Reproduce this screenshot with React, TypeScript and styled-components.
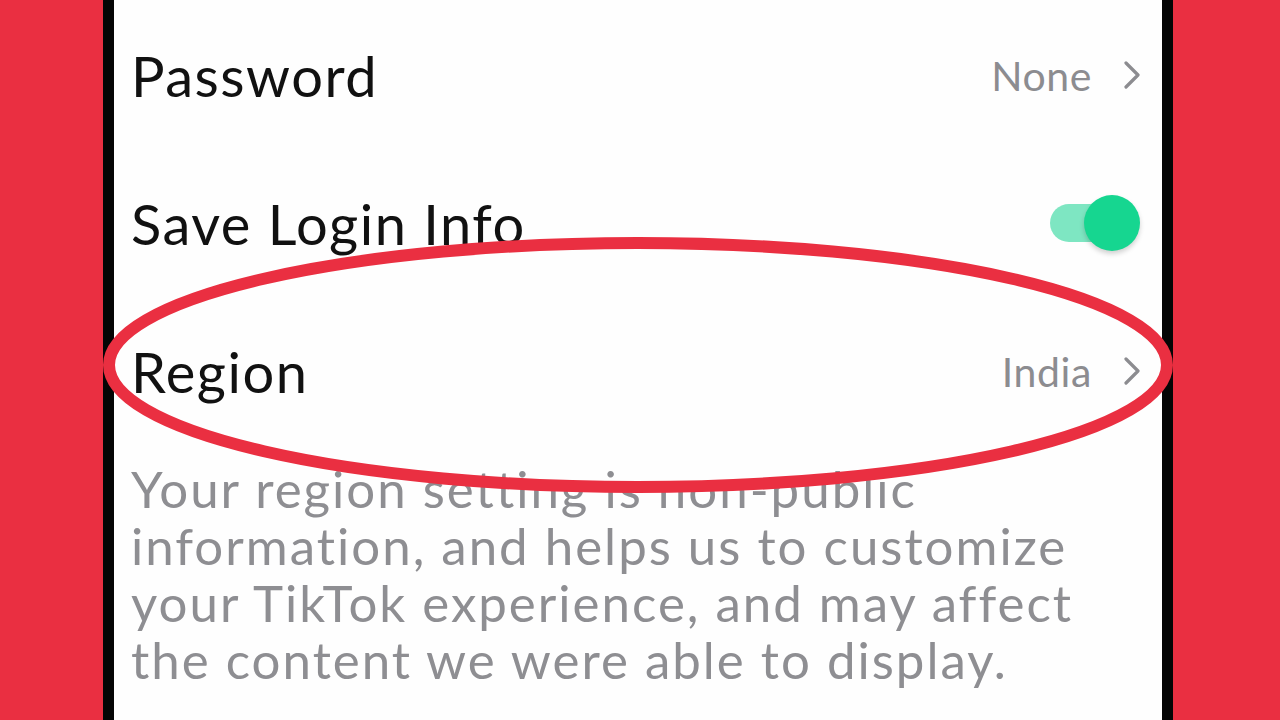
import * as React from 'react'
import styled, { createGlobalStyle } from 'styled-components'

const GlobalStyle = createGlobalStyle`
  html, body {
    margin: 0;
    padding: 0;
    width: 1280px;
    height: 720px;
    overflow: hidden;
    background: #ea2f41;
  }
`

const Page = styled.div`
  position: relative;
  width: 1280px;
  height: 720px;
  display: flex;
  background: #ea2f41;
  font-family: Lato, 'Open Sans', sans-serif;
`

const Side = styled.div`
  width: 103px;
  flex-shrink: 0;
`

const Phone = styled.div`
  width: 1070px;
  height: 720px;
  box-sizing: border-box;
  border-left: 11px solid #050505;
  border-right: 11px solid #050505;
  background: #fefefe;
  display: flex;
  flex-direction: column;
  padding: 0 22px 0 17px;
`

const Row = styled.div<{ $height: number }>`
  height: ${p => p.$height}px;
  display: flex;
  align-items: center;
  justify-content: space-between;
`

const Label = styled.div`
  font-size: 56px;
  color: #111;
  letter-spacing: 1.5px;
`

const Value = styled.div`
  display: flex;
  align-items: center;
  gap: 32px;
  font-size: 41px;
  color: #8c8c90;
  letter-spacing: 0.6px;
`

const Toggle = styled.div`
  position: relative;
  width: 90px;
  height: 58px;
  display: flex;
  align-items: center;
`

const Track = styled.div`
  width: 62px;
  height: 38px;
  border-radius: 19px;
  background: #7ee6c2;
`

const Knob = styled.div`
  position: absolute;
  right: 0;
  top: 1px;
  width: 56px;
  height: 56px;
  border-radius: 50%;
  background: #16d690;
  box-shadow: 0 3px 5px rgba(0, 0, 0, 0.18);
`

const Note = styled.p`
  margin: 14px 0 0;
  font-size: 51px;
  line-height: 57px;
  color: #8e8e92;
  letter-spacing: 2px;
  white-space: nowrap;
`

const Ring = styled.svg`
  position: absolute;
  left: 0;
  top: 0;
  pointer-events: none;
`

const Chevron = () => (
  <svg width="16" height="28" viewBox="0 0 16 28">
    <path
      d="M2 2 L14 14 L2 26"
      fill="none"
      stroke="#8c8c90"
      strokeWidth="3.2"
      strokeLinecap="round"
      strokeLinejoin="round"
    />
  </svg>
)

export default function App() {
  return (
    <Page>
      <GlobalStyle />
      <Side />
      <Phone>
        <Row $height={150}>
          <Label>Password</Label>
          <Value>
            None
            <Chevron />
          </Value>
        </Row>
        <Row $height={146}>
          <Label>Save Login Info</Label>
          <Toggle>
            <Track />
            <Knob />
          </Toggle>
        </Row>
        <Row $height={150}>
          <Label>Region</Label>
          <Value>
            India
            <Chevron />
          </Value>
        </Row>
        <Note>
          Your region setting is non-public
          <br />
          information, and helps us to customize
          <br />
          your TikTok experience, and may affect
          <br />
          the content we were able to display.
        </Note>
      </Phone>
      <Ring width="1280" height="720" viewBox="0 0 1280 720">
        <ellipse
          cx="638"
          cy="365"
          rx="529"
          ry="122"
          fill="none"
          stroke="#ea2f41"
          strokeWidth="12"
        />
      </Ring>
    </Page>
  )
}
